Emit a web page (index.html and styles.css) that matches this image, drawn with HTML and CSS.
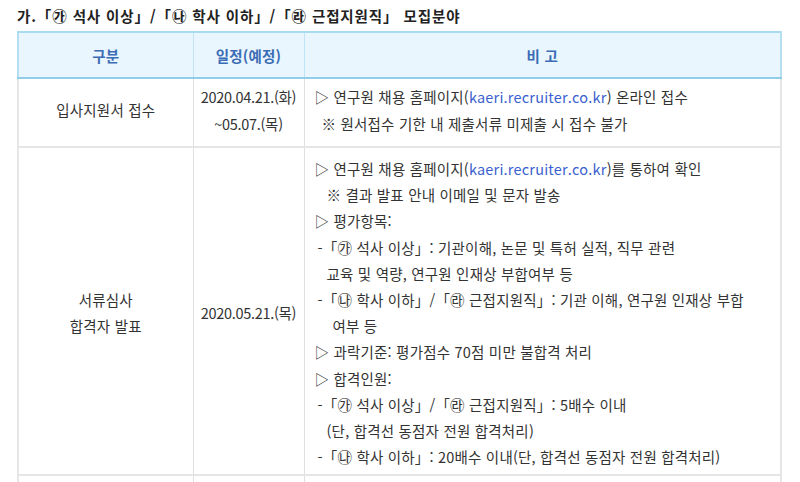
FILE: index.html
```html
<!DOCTYPE html>
<html lang="ko">
<head>
<meta charset="utf-8">
<title>모집분야</title>
<link rel="stylesheet" href="styles.css">
</head>
<body>
<div class="page">
  <h3 class="title">가.「㉮ 석사 이상」/「㉯ 학사 이하」/「㉱ 근접지원직」 모집분야</h3>
  <table class="tbl">
    <colgroup>
      <col class="c1"><col class="c2"><col class="c3">
    </colgroup>
    <thead>
      <tr><th>구분</th><th>일정(예정)</th><th>비 고</th></tr>
    </thead>
    <tbody>
      <tr class="first">
        <td class="ctr">입사지원서 접수</td>
        <td class="ctr date">2020.04.21.(화)<br>~05.07.(목)</td>
        <td class="desc">
          <div>▷ 연구원 채용 홈페이지(<span class="link">kaeri.recruiter.co.kr</span>) 온라인 접수</div>
          <div class="i1">※ 원서접수 기한 내 제출서류 미제출 시 접수 불가</div>
        </td>
      </tr>
      <tr class="second">
        <td class="ctr">서류심사<br>합격자 발표</td>
        <td class="ctr date">2020.05.21.(목)</td>
        <td class="desc">
          <div>▷ 연구원 채용 홈페이지(<span class="link">kaeri.recruiter.co.kr</span>)를 통하여 확인</div>
          <div class="i2">※ 결과 발표 안내 이메일 및 문자 발송</div>
          <div>▷ 평가항목:</div>
          <div class="d">-「㉮ 석사 이상」: 기관이해, 논문 및 특허 실적, 직무 관련</div>
          <div class="i2">교육 및 역량, 연구원 인재상 부합여부 등</div>
          <div class="d">-「㉯ 학사 이하」/「㉱ 근접지원직」: 기관 이해, 연구원 인재상 부합</div>
          <div class="i3">여부 등</div>
          <div>▷ 과락기준: 평가점수 70점 미만 불합격 처리</div>
          <div>▷ 합격인원:</div>
          <div class="d">-「㉮ 석사 이상」/「㉱ 근접지원직」: 5배수 이내</div>
          <div class="i2">(단, 합격선 동점자 전원 합격처리)</div>
          <div class="d">-「㉯ 학사 이하」: 20배수 이내(단, 합격선 동점자 전원 합격처리)</div>
        </td>
      </tr>
      <tr class="last">
        <td></td><td></td><td></td>
      </tr>
    </tbody>
  </table>
</div>
</body>
</html>
```
FILE: styles.css
```css
html, body {
  margin: 0;
  padding: 0;
  background: #ffffff;
}
body {
  font-family: "Noto Sans CJK KR", "Noto Sans", sans-serif;
  color: #333333;
  font-size: 14.5px;
  letter-spacing: 0.2px;
}
.page {
  padding: 6px 18px 0 17px;
}
.title {
  margin: 0 0 5px 0;
  font-size: 14.5px;
  font-weight: bold;
  color: #222222;
  line-height: 20px;
  letter-spacing: 0.9px;
}
.tbl {
  width: 765px;
  border-collapse: collapse;
  table-layout: fixed;
}
.c1 { width: 175px; }
.c2 { width: 111px; }
.c3 { width: auto; }
.tbl th {
  height: 44px;
  padding: 0;
  background: #eaf6fd;
  color: #3a6db5;
  font-weight: bold;
  font-size: 14.5px;
  border-top: 2px solid #a9dbf0;
  border-bottom: 2px solid #92cde8;
  border-left: 1px solid #bfe4f5;
  border-right: 1px solid #bfe4f5;
  text-align: center;
  vertical-align: middle;
}
.tbl th:first-child { border-left: 2px solid #b5def2; }
.tbl th:last-child { border-right: 2px solid #b5def2; }
.tbl td {
  border-bottom: 2px solid #e6e6e6;
  border-left: 1px solid #e0e0e0;
  border-right: 1px solid #e0e0e0;
  padding: 8px 10px 6px 10px;
  line-height: 26.5px;
  vertical-align: middle;
}
.tbl td:first-child { border-left: 2px solid #e6e6e6; }
.tbl td:last-child { border-right: 2px solid #e6e6e6; }
.first td { padding-top: 5px; padding-bottom: 9px; }
.tbl td.date {
  padding-left: 0;
  padding-right: 0;
  white-space: nowrap;
  letter-spacing: -0.3px;
}
.tbl td.desc { line-height: 26.2px; }
.second td { padding-top: 8px; padding-bottom: 4px; }
.ctr { text-align: center; }
.desc { text-align: left; }
.link { color: #3b5fcf; }
.i1 { padding-left: 7px; }
.i2 { padding-left: 12px; }
.i3 { padding-left: 18px; }
.d { padding-left: 3px; }
.last td { height: 30px; padding: 0; }
```
